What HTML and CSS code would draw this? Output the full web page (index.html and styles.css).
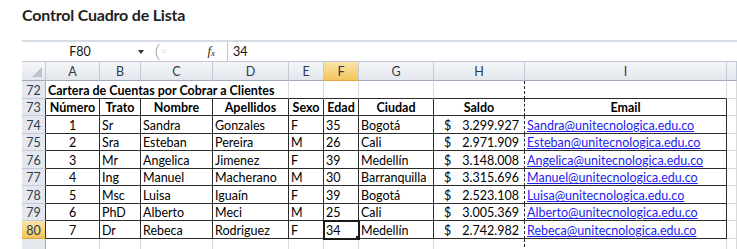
FILE: index.html
```html
<!DOCTYPE html>
<html lang="es">
<head>
  <meta charset="UTF-8" />
  <title>Control Cuadro de Lista</title>
  <link rel="stylesheet" href="styles.css">
</head>
<body>
  <h1 class="title">Control Cuadro de Lista</h1>

  <div class="sheet">
    <div class="formula-bar">
      <div class="name-box">
        <span class="cell-ref">F80</span>
        <span class="arrow"></span>
      </div>
      <div class="bar-buttons">
        <svg class="curve" width="8" height="18" viewBox="0 0 8 18">
          <path d="M7 1 Q1 9 7 17" fill="none" stroke="#9aa3ae" stroke-width="1"/>
        </svg>
        <span class="grip">=</span>
        <span class="fx">f<sub>x</sub></span>
      </div>
      <div class="formula-input">34</div>
    </div>

    <table class="grid">
      <colgroup>
        <col style="width:24px">
        <col style="width:54px">
        <col style="width:41px">
        <col style="width:72px">
        <col style="width:76px">
        <col style="width:35px">
        <col style="width:35px">
        <col style="width:75px">
        <col style="width:91px">
        <col style="width:202px">
        <col style="width:10px">
      </colgroup>
      <thead>
        <tr class="col-heads">
          <th class="corner"><span class="tri"></span></th>
          <th>A</th><th>B</th><th>C</th><th>D</th><th>E</th>
          <th class="sel">F</th><th>G</th><th>H</th><th class="pb">I</th><th></th>
        </tr>
      </thead>
      <tbody>
        <tr class="h18 above">
          <th class="rh">72</th>
          <td class="caption" colspan="4">Cartera de Cuentas por Cobrar a Clientes</td>
          <td></td><td></td><td></td><td class="h-col"></td><td></td><td class="j"></td>
        </tr>
        <tr class="h17 boxed heads">
          <th class="rh">73</th>
          <td>Número</td><td>Trato</td><td>Nombre</td><td>Apellidos</td><td>Sexo</td>
          <td>Edad</td><td>Ciudad</td><td class="h-col">Saldo</td><td>Email</td><td class="j"></td>
        </tr>
        <tr class="h18 boxed">
          <th class="rh">74</th>
          <td class="num">1</td><td>Sr</td><td>Sandra</td><td>Gonzales</td><td>F</td>
          <td>35</td><td>Bogotá</td>
          <td class="h-col"><span class="money"><span>$</span><span>3.299.927</span></span></td>
          <td><a href="#">Sandra@unitecnologica.edu.co</a></td><td class="j"></td>
        </tr>
        <tr class="h17 boxed">
          <th class="rh">75</th>
          <td class="num">2</td><td>Sra</td><td>Esteban</td><td>Pereira</td><td>M</td>
          <td>26</td><td>Cali</td>
          <td class="h-col"><span class="money"><span>$</span><span>2.971.909</span></span></td>
          <td><a href="#">Esteban@unitecnologica.edu.co</a></td><td class="j"></td>
        </tr>
        <tr class="h18 boxed">
          <th class="rh">76</th>
          <td class="num">3</td><td>Mr</td><td>Angelica</td><td>Jimenez</td><td>F</td>
          <td>39</td><td>Medellín</td>
          <td class="h-col"><span class="money"><span>$</span><span>3.148.008</span></span></td>
          <td><a href="#">Angelica@unitecnologica.edu.co</a></td><td class="j"></td>
        </tr>
        <tr class="h17 boxed">
          <th class="rh">77</th>
          <td class="num">4</td><td>Ing</td><td>Manuel</td><td>Macherano</td><td>M</td>
          <td>30</td><td>Barranquilla</td>
          <td class="h-col"><span class="money"><span>$</span><span>3.315.696</span></span></td>
          <td><a href="#">Manuel@unitecnologica.edu.co</a></td><td class="j"></td>
        </tr>
        <tr class="h18 boxed">
          <th class="rh">78</th>
          <td class="num">5</td><td>Msc</td><td>Luisa</td><td>Iguaín</td><td>F</td>
          <td>39</td><td>Bogotá</td>
          <td class="h-col"><span class="money"><span>$</span><span>2.523.108</span></span></td>
          <td><a href="#">Luisa@unitecnologica.edu.co</a></td><td class="j"></td>
        </tr>
        <tr class="h17 boxed">
          <th class="rh">79</th>
          <td class="num">6</td><td>PhD</td><td>Alberto</td><td>Meci</td><td>M</td>
          <td>25</td><td>Cali</td>
          <td class="h-col"><span class="money"><span>$</span><span>3.005.369</span></span></td>
          <td><a href="#">Alberto@unitecnologica.edu.co</a></td><td class="j"></td>
        </tr>
        <tr class="h18 boxed">
          <th class="rh sel-row">80</th>
          <td class="num">7</td><td>Dr</td><td>Rebeca</td><td>Rodriguez</td><td>F</td>
          <td class="active">34</td><td>Medellín</td>
          <td class="h-col"><span class="money"><span>$</span><span>2.742.982</span></span></td>
          <td><a href="#">Rebeca@unitecnologica.edu.co</a></td><td class="j"></td>
        </tr>
        <tr class="h18 below">
          <th class="rh"></th>
          <td></td><td></td><td></td><td></td><td></td>
          <td></td><td></td><td class="h-col"></td><td></td><td class="j"></td>
        </tr>
      </tbody>
    </table>
  </div>
</body>
</html>
```

FILE: styles.css
```css
body {
  margin: 0;
  padding: 0;
  background: #fff;
  font-family: Lato, "Liberation Sans", sans-serif;
  color: #000;
  overflow: hidden;
}

.title {
  margin: 5px 0 0 22px;
  height: 35px;
  font-size: 16px;
  font-weight: bold;
  color: #1e1e1e;
  letter-spacing: -0.2px;
}

.sheet {
  margin-left: 22px;
  width: 715px;
}

/* barra de fórmulas */
.formula-bar {
  display: flex;
  height: 19px;
  border-top: 2px solid #d6dce4;
  border-bottom: 1px solid #c3c9d2;
  background: #fff;
  font-size: 12.5px;
  line-height: 19px;
}

.name-box {
  width: 128px;
  display: flex;
  align-items: center;
}

.cell-ref {
  width: 116px;
  text-align: center;
  color: #111;
}

.arrow {
  width: 0;
  height: 0;
  border-left: 3px solid transparent;
  border-right: 3px solid transparent;
  border-top: 4px solid #333;
}

.bar-buttons {
  width: 77px;
  display: flex;
  align-items: center;
}

.curve {
  margin-left: 2px;
}

.grip {
  color: #c5cad1;
  font-size: 9px;
  margin-left: 1px;
}

.fx {
  margin-left: auto;
  margin-right: 12px;
  font-family: "Liberation Serif", serif;
  font-style: italic;
  font-size: 13px;
  color: #222;
}

.fx sub {
  font-size: 9px;
  vertical-align: -1px;
}

.formula-input {
  flex: 1;
  border-left: 1px solid #c3c9d2;
  padding-left: 5px;
  color: #111;
}

/* cuadrícula */
.grid {
  width: 715px;
  table-layout: fixed;
  border-collapse: separate;
  border-spacing: 0;
  font-size: 12.5px;
}

.grid th,
.grid td {
  padding: 0 2px;
  overflow: hidden;
  white-space: nowrap;
  vertical-align: bottom;
  line-height: 15px;
  box-sizing: border-box;
}

.grid td {
  border-right: 1px solid #dadada;
  border-bottom: 1px solid #dadada;
}

.col-heads th {
  height: 19px;
  font-weight: normal;
  color: #2f3b4c;
  text-align: center;
  vertical-align: middle;
  background: linear-gradient(#f4f6f9, #e3e7ed);
  border-right: 1px solid #c5cbd4;
  border-bottom: 1px solid #9fabbb;
}

.col-heads th.sel {
  background: linear-gradient(#fae4a9, #f2c55c);
  border-bottom-color: #e2a83c;
}

.col-heads th.corner {
  position: relative;
}

.tri {
  position: absolute;
  right: 3px;
  bottom: 3px;
  width: 0;
  height: 0;
  border-left: 10px solid transparent;
  border-bottom: 10px solid #bcc3cd;
}

.grid th.rh {
  font-weight: normal;
  color: #2f3b4c;
  text-align: center;
  background: #e4e8ee;
  border-right: 1px solid #9fabbb;
  border-bottom: 1px solid #c5cbd4;
}

.grid th.sel-row {
  background: linear-gradient(#fae4a9, #f2c55c);
  border-bottom-color: #e2a83c;
}

tr.h18 { height: 18px; }
tr.h17 { height: 17px; }

.caption {
  font-weight: bold;
}

tr.above td {
  border-bottom-color: #2c2c2c;
}

tr.above td.j {
  border-bottom-color: #dadada;
}

tr.boxed td {
  border-right-color: #2c2c2c;
  border-bottom-color: #2c2c2c;
}

tr.boxed th.rh {
  border-right-color: #2c2c2c;
}

tr.boxed td.j {
  border-right-color: #dadada;
  border-bottom-color: #dadada;
}

.grid td.h-col {
  border-right: 1px dashed #2c2c2c;
}

.heads td {
  font-weight: bold;
  text-align: center;
}

td.num {
  text-align: center;
}

.money {
  display: flex;
  justify-content: space-between;
  padding: 0 3px 0 8px;
}

.grid a {
  color: #1d1df0;
  text-decoration: underline;
}

td.active {
  position: relative;
  outline: 2px solid #1a1a1a;
  outline-offset: -1px;
}

td.active::after {
  content: "";
  position: absolute;
  right: -3px;
  bottom: -3px;
  width: 4px;
  height: 4px;
  background: #1a1a1a;
  border: 1px solid #fff;
}
```
